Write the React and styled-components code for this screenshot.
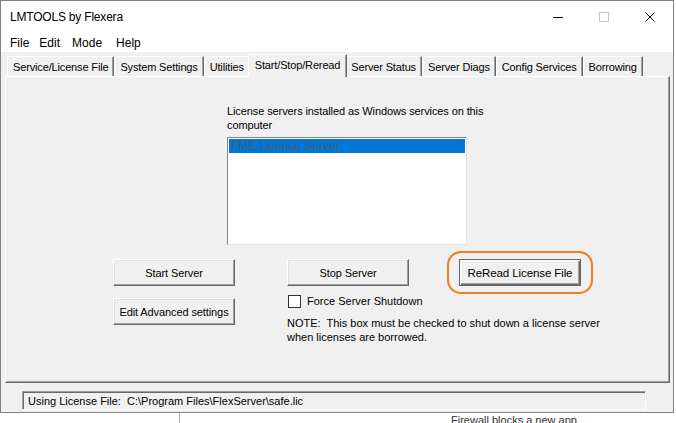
import React from "react";
import styled, { createGlobalStyle, css } from "styled-components";

const Global = createGlobalStyle`
  html, body { margin: 0; padding: 0; background: #ffffff; }
  body { font-family: "Liberation Sans", Arial, sans-serif; overflow: hidden; }
  * { box-sizing: border-box; }
`;

const Page = styled.div`
  width: 676px;
  height: 423px;
  display: flex;
  flex-direction: column;
  overflow: hidden;
`;

const Window = styled.div`
  width: 674px;
  height: 413px;
  border: 1px solid #838383;
  background: #f0f0f0;
  display: flex;
  flex-direction: column;
`;

const TitleBar = styled.div`
  height: 32px;
  background: #ffffff;
  display: flex;
  align-items: center;
  padding-left: 9px;
  font-size: 12px;
  color: #000;
`;

const Title = styled.div`
  flex: 1;
  letter-spacing: -0.2px;
`;

const CtrlBtn = styled.div`
  width: 46px;
  height: 32px;
  display: flex;
  align-items: center;
  justify-content: center;
`;

const MenuBar = styled.div`
  height: 19px;
  background: #ffffff;
  display: flex;
  align-items: center;
  padding-left: 9px;
  font-size: 12px;
`;

const MenuItem = styled.span`
  margin-right: ${(p) => p.$gap}px;
`;

const Body = styled.div`
  flex: 1;
  display: flex;
  flex-direction: column;
  padding: 1px 4px 0 4px;
  font-size: 11px;
`;

const TabStrip = styled.div`
  height: 23px;
  display: flex;
  align-items: flex-end;
  padding-left: 2px;
  position: relative;
  z-index: 1;
`;

const Tab = styled.div`
  height: 20px;
  padding: 0 5px;
  display: flex;
  align-items: center;
  white-space: nowrap;
  border-top: 1px solid #ffffff;
  border-left: 1px solid #ffffff;
  border-right: 1px solid #696969;
  box-shadow: inset -1px 0 0 #a0a0a0;
  background: #f0f0f0;
  letter-spacing: -0.15px;
  ${(p) =>
    p.$active &&
    css`
      height: 23px;
      margin: 0 -2px;
      padding: 0 6px 3px 6px;
      margin-bottom: -1px;
      position: relative;
      z-index: 2;
    `}
`;

const Panel = styled.div`
  height: 307px;
  width: 665px;
  border-top: 1px solid #ffffff;
  border-left: 1px solid #ffffff;
  border-right: 1px solid #696969;
  border-bottom: 1px solid #696969;
  box-shadow: inset -1px -1px 0 #a0a0a0;
  display: flex;
  flex-direction: column;
  padding-top: 27px;
`;

const Top = styled.div`
  margin-left: 221px;
  width: 260px;
`;

const Label = styled.div`
  line-height: 14px;
  letter-spacing: -0.1px;
`;

const ListBox = styled.div`
  margin-top: 5px;
  width: 240px;
  height: 108px;
  background: #ffffff;
  border-top: 1px solid #828282;
  border-left: 1px solid #828282;
  border-right: 1px solid #e3e3e3;
  border-bottom: 1px solid #e3e3e3;
  padding: 1px;
`;

const ListItem = styled.div`
  height: 14px;
  line-height: 14px;
  padding-left: 2px;
  background: ${(p) => (p.$selected ? "#0078d7" : "transparent")};
  color: ${(p) => (p.$selected ? "#3d5e85" : "#000")};
  font-size: 12px;
`;

const Controls = styled.div`
  margin-top: 14px;
  margin-left: 107px;
  display: flex;
  align-items: flex-start;
`;

const Column = styled.div`
  display: flex;
  flex-direction: column;
  width: 122px;
  margin-right: ${(p) => p.$gap || 0}px;
`;

const Button = styled.div`
  width: 122px;
  height: 27px;
  display: flex;
  align-items: center;
  justify-content: center;
  font-size: 11px;
  background: #f0f0f0;
  border-top: 1px solid #ffffff;
  border-left: 1px solid #ffffff;
  border-right: 1px solid #696969;
  border-bottom: 1px solid #696969;
  box-shadow: inset -1px -1px 0 #a0a0a0, inset 1px 1px 0 #e3e3e3;
  margin-top: ${(p) => p.$top || 0}px;
  letter-spacing: -0.1px;
  ${(p) =>
    p.$default &&
    css`
      border: 1px solid #646464;
      box-shadow: inset 1px 1px 0 #ffffff, inset -1px -1px 0 #696969,
        inset -2px -2px 0 #a0a0a0;
      font-size: 11.5px;
    `}
`;

const Highlight = styled.div`
  position: relative;
`;

const Ring = styled.div`
  position: absolute;
  left: -12px;
  top: -8px;
  width: 146px;
  height: 43px;
  border: 2px solid #f07d22;
  border-radius: 14px;
  pointer-events: none;
`;

const CheckRow = styled.div`
  display: flex;
  align-items: center;
  margin-top: 8px;
  height: 14px;
  white-space: nowrap;
`;

const CheckBox = styled.div`
  flex: 0 0 13px;
  width: 13px;
  height: 13px;
  background: #ffffff;
  border: 1px solid #333333;
  margin-left: 1px;
  margin-right: 6px;
`;

const Note = styled.div`
  margin-top: 8px;
  line-height: 14px;
  white-space: pre;
  width: 320px;
`;

const StatusRow = styled.div`
  flex: 1;
  padding: 8px 0 0 17px;
`;

const StatusField = styled.div`
  width: 624px;
  height: 19px;
  border-top: 1px solid #a0a0a0;
  border-left: 1px solid #a0a0a0;
  border-right: 1px solid #ffffff;
  border-bottom: 1px solid #ffffff;
  box-shadow: inset 1px 1px 0 #696969;
  display: flex;
  align-items: center;
  padding-left: 5px;
  font-size: 11px;
  white-space: pre;
`;

const Behind = styled.div`
  height: 10px;
  overflow: hidden;
  display: flex;
`;

const BehindLine = styled.div`
  width: 1px;
  margin-left: 179px;
  background: #b0b0b0;
`;

const BehindText = styled.div`
  margin-left: 271px;
  margin-top: 1px;
  font-size: 11px;
  line-height: 12px;
  color: #333;
  white-space: nowrap;
`;

const tabs = [
  "Service/License File",
  "System Settings",
  "Utilities",
  "Start/Stop/Reread",
  "Server Status",
  "Server Diags",
  "Config Services",
  "Borrowing",
];

export default function App() {
  return (
    <Page>
      <Global />
      <Window>
        <TitleBar>
          <Title>LMTOOLS by Flexera</Title>
          <CtrlBtn>
            <svg width="10" height="10" viewBox="0 0 10 10">
              <line x1="0" y1="5.5" x2="10" y2="5.5" stroke="#000" strokeWidth="1" />
            </svg>
          </CtrlBtn>
          <CtrlBtn>
            <svg width="10" height="10" viewBox="0 0 10 10">
              <rect x="0.5" y="0.5" width="9" height="9" fill="none" stroke="#c4c4c4" strokeWidth="1" />
            </svg>
          </CtrlBtn>
          <CtrlBtn>
            <svg width="10" height="10" viewBox="0 0 10 10">
              <path d="M0.5 0.5 L9.5 9.5 M9.5 0.5 L0.5 9.5" stroke="#000" strokeWidth="1" fill="none" />
            </svg>
          </CtrlBtn>
        </TitleBar>
        <MenuBar>
          <MenuItem $gap={10}>File</MenuItem>
          <MenuItem $gap={12}>Edit</MenuItem>
          <MenuItem $gap={14}>Mode</MenuItem>
          <MenuItem $gap={0}>Help</MenuItem>
        </MenuBar>
        <Body>
          <TabStrip>
            {tabs.map((t) => (
              <Tab key={t} $active={t === "Start/Stop/Reread"}>
                {t}
              </Tab>
            ))}
          </TabStrip>
          <Panel>
            <Top>
              <Label>
                License servers installed as Windows services on this
                <br />
                computer
              </Label>
              <ListBox>
                <ListItem $selected>FME License Server</ListItem>
              </ListBox>
            </Top>
            <Controls>
              <Column $gap={52}>
                <Button>Start Server</Button>
                <Button $top={12}>Edit Advanced settings</Button>
              </Column>
              <Column $gap={50}>
                <Button>Stop Server</Button>
                <CheckRow>
                  <CheckBox />
                  Force Server Shutdown
                </CheckRow>
                <Note>
                  {"NOTE:  This box must be checked to shut down a license server"}
                  <br />
                  {"when licenses are borrowed."}
                </Note>
              </Column>
              <Column>
                <Highlight>
                  <Button $default>ReRead License File</Button>
                  <Ring />
                </Highlight>
              </Column>
            </Controls>
          </Panel>
          <StatusRow>
            <StatusField>{"Using License File:  C:\\Program Files\\FlexServer\\safe.lic"}</StatusField>
          </StatusRow>
        </Body>
      </Window>
      <Behind>
        <BehindLine />
        <BehindText>Firewall blocks a new app</BehindText>
      </Behind>
    </Page>
  );
}
